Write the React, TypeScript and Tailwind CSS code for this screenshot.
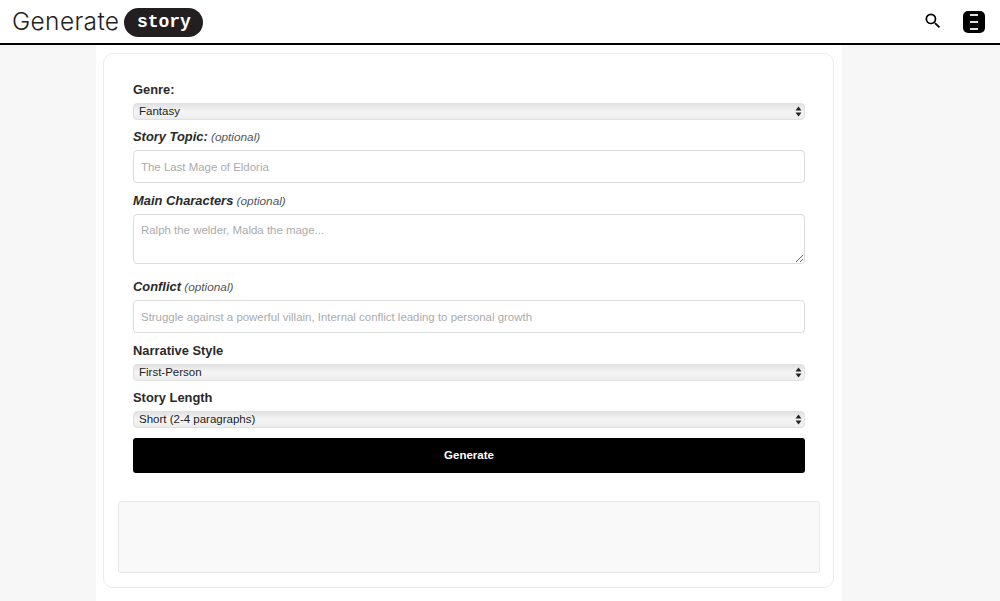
import { MdSearch } from "react-icons/md";

function Label({ title, italic, optional }: { title: string; italic?: boolean; optional?: boolean }) {
  return (
    <label className={`block text-[12.9px] leading-[16px] font-bold text-[#2a2a2a] ${italic ? "italic" : ""}`}>
      {title}
      {optional && <span className="text-[11.8px] leading-none font-normal text-[#555]"> (optional)</span>}
    </label>
  );
}

function FakeSelect({ value }: { value: string }) {
  return (
    <div className="relative h-[17px] w-full">
      <select
        defaultValue={value}
        className="block h-[17px] w-full appearance-none rounded-[4px] border border-[#e0e0e0] bg-gradient-to-b from-[#e2e2e2] via-[#f5f5f5] to-[#ededed] pl-[5px] text-[11.5px] leading-[15px] text-[#222] outline-none"
      >
        <option>{value}</option>
      </select>
      <svg className="absolute right-[3px] top-[3px]" width="7" height="11" viewBox="0 0 7 11" fill="#222">
        <path d="M3.5 0.5 L6.5 4.5 H0.5 Z" />
        <path d="M3.5 10.5 L6.5 6.5 H0.5 Z" />
      </svg>
    </div>
  );
}

export default function App() {
  const inputCls =
    "block w-full rounded-[4px] border border-[#dcdcdc] bg-white px-[7px] text-[11.45px] text-[#222] outline-none placeholder:text-[#ababab]";

  return (
    <div className="flex min-h-[601px] flex-col bg-[#f7f7f7] font-['Liberation_Sans',Arial,sans-serif]">
      <header className="flex h-[45px] shrink-0 items-center justify-between border-b-[2px] border-black bg-white pl-3 pr-[15px]">
        <div className="flex items-center">
          <span className="font-['Inter',sans-serif] text-[24.5px] leading-none font-light tracking-[0.35px] text-[#222]">
            Generate
          </span>
          <span className="mt-[2px] ml-[5px] flex h-[29px] w-[79px] items-center justify-center rounded-full bg-[#231f20] font-['Liberation_Mono',monospace] text-[18px] font-bold text-white">
            story
          </span>
        </div>
        <div className="flex items-center gap-[20px]">
          <MdSearch size={20} className="-mt-[2px] text-black" />
          <div className="flex h-[22px] w-[22px] flex-col items-center justify-center gap-[5px] rounded-[5px] bg-black">
            <span className="h-[2px] w-[8px] bg-[#ddd]" />
            <span className="h-[2px] w-[8px] bg-[#ddd]" />
            <span className="h-[2px] w-[8px] bg-[#ddd]" />
          </div>
        </div>
      </header>

      <main className="mr-[158px] ml-[96px] flex-1 bg-white px-[7px] pt-[8px]">
        <div className="h-[535px] w-[731px] rounded-[10px] border border-[#ececec] pt-[28px] pr-[28px] pl-[29px]">
          <form className="flex flex-col">
            <Label title="Genre:" />
            <div className="mt-[5px]">
              <FakeSelect value="Fantasy" />
            </div>
            <div className="mt-[9px]">
              <Label title="Story Topic:" italic optional />
            </div>
            <input className={`${inputCls} mt-[5px] h-[33px]`} placeholder="The Last Mage of Eldoria" />
            <div className="mt-[10px]">
              <Label title="Main Characters" italic optional />
            </div>
            <textarea
              className={`${inputCls} mt-[5px] h-[50px] py-[7px]`}
              placeholder="Ralph the welder, Malda the mage..."
            />
            <div className="mt-[15px]">
              <Label title="Conflict" italic optional />
            </div>
            <input
              className={`${inputCls} mt-[5px] h-[33px]`}
              placeholder="Struggle against a powerful villain, Internal conflict leading to personal growth"
            />
            <div className="mt-[10px]">
              <Label title="Narrative Style" />
            </div>
            <div className="mt-[5px]">
              <FakeSelect value="First-Person" />
            </div>
            <div className="mt-[9px]">
              <Label title="Story Length" />
            </div>
            <div className="mt-[5px]">
              <FakeSelect value="Short (2-4 paragraphs)" />
            </div>
            <button
              type="button"
              className="mt-[10px] h-[35px] rounded-[3px] bg-black text-[11.5px] font-bold text-white"
            >
              Generate
            </button>
          </form>
          <div className="-mx-[15px] mt-[28px] h-[72px] rounded-[3px] border border-[#e8e8e8] bg-[#f9f9f9]" />
        </div>
      </main>
    </div>
  );
}
